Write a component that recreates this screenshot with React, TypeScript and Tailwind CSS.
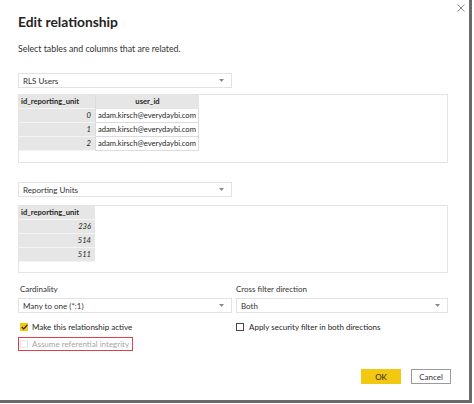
import React from 'react';

const font = { fontFamily: 'Lato, "Noto Sans", sans-serif' };

const Caret: React.FC = () => (
  <svg width="5" height="3" viewBox="0 0 5 3" className="shrink-0">
    <path d="M0 0 L5 0 L2.5 3 Z" fill="#8a8a8a" />
  </svg>
);

interface DropdownProps {
  value: string;
  width: string;
}

const Dropdown: React.FC<DropdownProps> = ({ value, width }) => (
  <div
    className={`${width} h-[15px] border border-[#e2e2e2] bg-white flex items-center justify-between pl-[4px] pr-[7px] text-[8px] text-[#333]`}
  >
    <span className="leading-none">{value}</span>
    <Caret />
  </div>
);

const usersRows = [
  { id: '0', user: 'adam.kirsch@everydaybi.com' },
  { id: '1', user: 'adam.kirsch@everydaybi.com' },
  { id: '2', user: 'adam.kirsch@everydaybi.com' },
];

const unitRows = ['236', '514', '511'];

const App: React.FC = () => {
  return (
    <div className="w-[474px] h-[404px] bg-white" style={font}>
      <div className="w-[472px] h-[403px] border-r-[3px] border-b-[3px] border-[#6a6a6a] bg-white px-[18px] text-[#252423]">
        {/* close */}
        <div className="h-[12px] flex justify-end items-end pr-[4px] -mr-[18px]">
          <svg width="8" height="8" viewBox="0 0 8 8">
            <path d="M0.5 0.5 L7.5 7.5 M7.5 0.5 L0.5 7.5" stroke="#7a7a7a" strokeWidth="0.9" />
          </svg>
        </div>

        <h1 className="h-[20px] leading-[20px] text-[13.8px] font-bold text-[#252423]">
          Edit relationship
        </h1>

        <p className="mt-[10px] h-[14px] leading-[14px] text-[8.8px] text-[#333]">
          Select tables and columns that are related.
        </p>

        <div className="mt-[17px]">
          <Dropdown value="RLS Users" width="w-[214px]" />
        </div>

        <div className="mt-[6px] w-[430px] h-[69px] border border-[#e4e4e4] bg-white">
          <div className="grid grid-cols-[76px_104px] text-[7.6px] leading-[13px] whitespace-nowrap">
            <div className="h-[14px] bg-[#e6e6e6] font-bold pl-[2px] border-b border-[#f4f4f4]">
              id_reporting_unit
            </div>
            <div className="h-[14px] bg-[#e6e6e6] font-bold text-center border-l border-[#dcdcdc]">
              user_id
            </div>
            {usersRows.map((r) => (
              <React.Fragment key={r.id}>
                <div className="h-[14px] bg-[#e6e6e6] italic text-right pr-[4px] border-b border-[#f4f4f4]">
                  {r.id}
                </div>
                <div className="h-[14px] bg-white pl-[2px] border-l border-b border-r border-[#dcdcdc]">
                  {r.user}
                </div>
              </React.Fragment>
            ))}
          </div>
        </div>

        <div className="mt-[19px]">
          <Dropdown value="Reporting Units" width="w-[214px]" />
        </div>

        <div className="mt-[8px] w-[430px] h-[68px] border border-[#e4e4e4] bg-white">
          <div className="w-[76px] text-[7.6px] leading-[13px]">
            <div className="h-[14px] bg-[#e6e6e6] font-bold pl-[2px] border-b border-[#f4f4f4]">
              id_reporting_unit
            </div>
            {unitRows.map((v) => (
              <div
                key={v}
                className="h-[14px] bg-[#e6e6e6] italic text-right pr-[4px] border-b border-[#f4f4f4]"
              >
                {v}
              </div>
            ))}
          </div>
        </div>

        <div className="mt-[10px] w-[430px] grid grid-cols-[214px_212px] gap-x-[4px] text-[8px]">
          <div>
            <div className="h-[12px] leading-[12px] pl-[2px] text-[#333]">Cardinality</div>
            <div className="mt-[3px]">
              <Dropdown value="Many to one (*:1)" width="w-[214px]" />
            </div>
          </div>
          <div>
            <div className="h-[12px] leading-[12px] text-[#333]">Cross filter direction</div>
            <div className="mt-[3px]">
              <Dropdown value="Both" width="w-[212px]" />
            </div>
          </div>

          <div className="mt-[8px]">
            <label className="h-[12px] flex items-center gap-[4px] pl-[2px] text-[#252423] whitespace-nowrap">
              <span className="w-[8px] h-[8px] bg-[#f2c811] flex items-center justify-center">
                <svg width="7" height="6" viewBox="0 0 7 6">
                  <path d="M0.8 3 L2.7 4.9 L6.3 1" stroke="#252423" strokeWidth="1.2" fill="none" />
                </svg>
              </span>
              <span className="leading-none">Make this relationship active</span>
            </label>
            <label className="mt-[4px] w-[115px] h-[14px] flex items-center gap-[4px] pl-[1px] border border-[#e0404e] text-[#a6a6a6] whitespace-nowrap">
              <span className="w-[8px] h-[8px] border border-[#e6e6e6] bg-white" />
              <span className="leading-none">Assume referential integrity</span>
            </label>
          </div>
          <div className="mt-[8px]">
            <label className="h-[12px] flex items-center gap-[5px] text-[#252423] whitespace-nowrap">
              <span className="w-[8px] h-[8px] border border-[#444] bg-white" />
              <span className="leading-none">Apply security filter in both directions</span>
            </label>
          </div>
        </div>

        <div className="mt-[18px] flex justify-end gap-[10px] w-[433px]">
          <button className="w-[40px] h-[15px] bg-[#f2c811] text-[8px] text-[#252423] leading-none">
            OK
          </button>
          <button className="w-[40px] h-[15px] bg-white border border-[#9a9a9a] text-[8px] text-[#333] leading-none">
            Cancel
          </button>
        </div>
      </div>
    </div>
  );
};

export default App;
